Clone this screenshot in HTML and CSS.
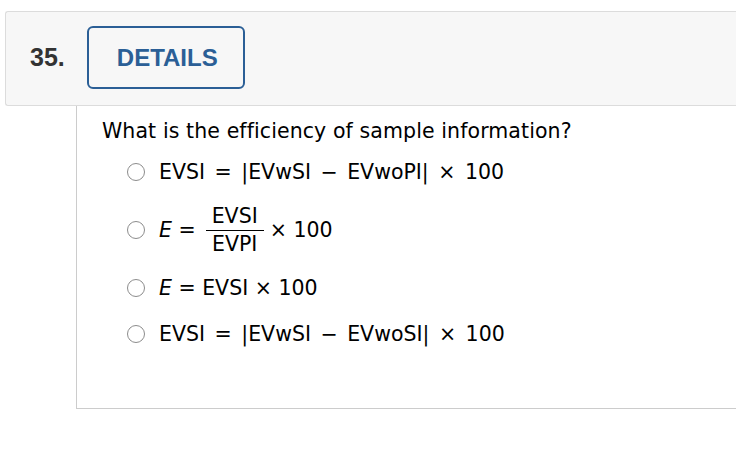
FILE: index.html
```html
<!DOCTYPE html>
<html>
<head>
<meta charset="utf-8">
<link rel="stylesheet" href="styles.css">
</head>
<body>
<div class="header">
  <span class="qnum">35.</span>
  <button class="details">DETAILS</button>
</div>
<div class="content">
  <p class="question">What is the efficiency of sample information?</p>
  <ul class="options">
    <li class="opt"><span class="radio"></span><span class="expr wide">EVSI = |EVwSI − EVwoPI| × 100</span></li>
    <li class="opt opt-frac"><span class="radio"></span><span class="expr"><i class="var">E</i> =<span class="frac"><span class="num">EVSI</span><span class="den">EVPI</span></span>× 100</span></li>
    <li class="opt"><span class="radio"></span><span class="expr"><i class="var">E</i> = EVSI × 100</span></li>
    <li class="opt"><span class="radio"></span><span class="expr wide">EVSI = |EVwSI − EVwoSI| × 100</span></li>
  </ul>
</div>
</body>
</html>
```
FILE: styles.css
```css
html, body {
  margin: 0;
  padding: 0;
  background: #ffffff;
}
body {
  padding-top: 11px;
  overflow: hidden;
}
.header {
  margin-left: 5px;
  height: 93px;
  box-sizing: content-box;
  border: 1px solid #dcdcdc;
  border-right: none;
  border-radius: 3px 0 0 3px;
  background: #f7f7f7;
  display: flex;
  align-items: center;
  padding-left: 24px;
  gap: 22px;
}
.qnum {
  font-family: "Liberation Sans", Arial, sans-serif;
  font-weight: bold;
  font-size: 25px;
  color: #333333;
  margin-top: -2px;
}
.details {
  width: 158px;
  height: 63px;
  box-sizing: border-box;
  border: 2px solid #2b5f96;
  border-radius: 6px;
  background: transparent;
  color: #2b5f96;
  font-family: "Liberation Sans", Arial, sans-serif;
  font-weight: bold;
  font-size: 24px;
  padding: 0 0 0 3px;
  margin-top: -2px;
}
.content {
  margin-left: 76px;
  height: 302px;
  border-left: 1px solid #cccccc;
  border-bottom: 1px solid #cccccc;
  padding-left: 25px;
  font-family: "DejaVu Sans", Verdana, sans-serif;
  font-size: 20.5px;
  color: #000000;
}
.question {
  margin: 0;
  padding-top: 13px;
  line-height: 24px;
  letter-spacing: 0.1px;
}
.options {
  list-style: none;
  margin: 0;
  padding: 0 0 0 25px;
}
.opt {
  display: flex;
  align-items: center;
  height: 46px;
}
.opt:first-child {
  margin-top: 6px;
}
.opt-frac {
  height: 70px;
}
.radio {
  width: 16px;
  height: 16px;
  border: 1px solid #8c8c8c;
  border-radius: 50%;
  background: #ffffff;
  flex: none;
  margin-right: 14px;
}
.expr {
  display: inline-flex;
  align-items: center;
  white-space: pre;
}
.wide {
  word-spacing: 3px;
}
.var {
  font-style: italic;
}
.frac {
  display: inline-flex;
  flex-direction: column;
  align-items: center;
  margin: 0 6px 0 10px;
  line-height: 22px;
}
.num {
  border-bottom: 1px solid #000000;
  padding: 0 6px 3px;
}
.den {
  padding-top: 2px;
}
```
